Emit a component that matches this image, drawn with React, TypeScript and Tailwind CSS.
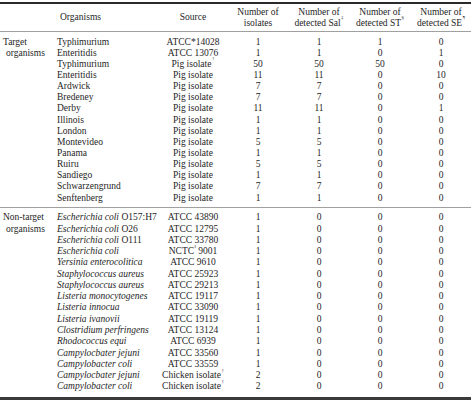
import React from "react";

type Row = {
  name: React.ReactNode;
  label?: string;
  source: React.ReactNode;
  vals: string[];
};

const Sup = ({ c }: { c: string }) => (
  <sup className="text-[5px] leading-none align-top ml-[0.5px]">{c}</sup>
);

const pig = "Pig isolate";

const targetRows: Row[] = [
  { name: "Typhimurium", label: "Target", source: "ATCC*14028", vals: ["1", "1", "1", "0"] },
  { name: "Enteritidis", label: "organisms", source: "ATCC 13076", vals: ["1", "1", "0", "1"] },
  { name: "Typhimurium", source: <>Pig isolate<Sup c="†" /></>, vals: ["50", "50", "50", "0"] },
  { name: "Enteritidis", source: pig, vals: ["11", "11", "0", "10"] },
  { name: "Ardwick", source: pig, vals: ["7", "7", "0", "0"] },
  { name: "Bredeney", source: pig, vals: ["7", "7", "0", "0"] },
  { name: "Derby", source: pig, vals: ["11", "11", "0", "1"] },
  { name: "Illinois", source: pig, vals: ["1", "1", "0", "0"] },
  { name: "London", source: pig, vals: ["1", "1", "0", "0"] },
  { name: "Montevideo", source: pig, vals: ["5", "5", "0", "0"] },
  { name: "Panama", source: pig, vals: ["1", "1", "0", "0"] },
  { name: "Ruiru", source: pig, vals: ["5", "5", "0", "0"] },
  { name: "Sandiego", source: pig, vals: ["1", "1", "0", "0"] },
  { name: "Schwarzengrund", source: pig, vals: ["7", "7", "0", "0"] },
  { name: "Senftenberg", source: pig, vals: ["1", "1", "0", "0"] },
];

const it = (s: string, rest?: string) => (
  <>
    <i>{s}</i>
    {rest ? " " + rest : ""}
  </>
);

const zeros = ["1", "0", "0", "0"];
const chick = <>Chicken isolate<Sup c="†" /></>;

const nonTargetRows: Row[] = [
  { name: it("Escherichia coli", "O157:H7"), label: "Non-target", source: "ATCC 43890", vals: zeros },
  { name: it("Escherichia coli", "O26"), label: "organisms", source: "ATCC 12795", vals: zeros },
  { name: it("Escherichia coli", "O111"), source: "ATCC 33780", vals: zeros },
  { name: it("Escherichia coli"), source: <>NCTC<Sup c="‖" /> 9001</>, vals: zeros },
  { name: it("Yersinia enterocolitica"), source: "ATCC 9610", vals: zeros },
  { name: it("Staphylococcus aureus"), source: "ATCC 25923", vals: zeros },
  { name: it("Staphylococcus aureus"), source: "ATCC 29213", vals: zeros },
  { name: it("Listeria monocytogenes"), source: "ATCC 19117", vals: zeros },
  { name: it("Listeria innocua"), source: "ATCC 33090", vals: zeros },
  { name: it("Listeria ivanovii"), source: "ATCC 19119", vals: zeros },
  { name: it("Clostridium perfringens"), source: "ATCC 13124", vals: zeros },
  { name: it("Rhodococcus equi"), source: "ATCC 6939", vals: zeros },
  { name: it("Campylocbater jejuni"), source: "ATCC 33560", vals: zeros },
  { name: it("Campylobacter coli"), source: "ATCC 33559", vals: zeros },
  { name: it("Campylocbater jejuni"), source: chick, vals: ["2", "0", "0", "0"] },
  { name: it("Campylobacter coli"), source: chick, vals: ["2", "0", "0", "0"] },
];

const cols = "grid grid-cols-[55px_95px_86px_44px_78px_44px_69px]";

function BodyRow({ row, idx, h }: { row: Row; idx: number; h: string }) {
  return (
    <div className={`${cols} ${h} items-center whitespace-nowrap`}>
      <div className={idx === 1 ? "pl-[6px]" : "pl-[3px]"}>{row.label}</div>
      <div className="pl-[2px]">{row.name}</div>
      <div className="text-center">{row.source}</div>
      <div className="text-center">{row.vals[0]}</div>
      <div className="text-center">{row.vals[1]}</div>
      <div className="text-center">{row.vals[2]}</div>
      <div className="text-center pl-[9px]">{row.vals[3]}</div>
    </div>
  );
}

function HeadCell({ a, b, pad }: { a: string; b: React.ReactNode; pad?: boolean }) {
  return (
    <div className={`flex flex-col items-center leading-[10.5px] ${pad ? "pl-[9px]" : ""}`}>
      <span>{a}</span>
      <span>{b}</span>
    </div>
  );
}

export default function App() {
  return (
    <div
      className="w-[474px] h-[400px] bg-white text-[#1e1e1e] text-[9.5px] leading-[11px] overflow-hidden"
      style={{ fontFamily: '"Liberation Serif", "Times New Roman", serif' }}
    >
      <div className="w-[471px]">
        <div className="mt-[2px] h-[2px] bg-[#2a2a2a]" />
        {/* header */}
        <div className={`${cols} h-[27px] items-center whitespace-nowrap`}>
          <div />
          <div className="text-center">
            <span className="relative left-[-22px]">Organisms</span>
          </div>
          <div className="text-center">Source</div>
          <HeadCell a="Number of" b="isolates" />
          <HeadCell a="Number of" b={<>detected Sal<Sup c="‡" /></>} />
          <HeadCell a="Number of" b={<>detected ST<Sup c="§" /></>} />
          <HeadCell a="Number of" b={<>detected SE<Sup c="¶" /></>} pad />
        </div>
        <div className="h-px bg-[#a0a0a0]" />
        <div className="pt-[4.5px] pb-[3px]">
          {targetRows.map((r, i) => (
            <BodyRow key={i} row={r} idx={i} h="h-[11.15px]" />
          ))}
        </div>
        <div className="h-px bg-[#a0a0a0]" />
        <div className="pt-[4.6px] pb-[5px]">
          {nonTargetRows.map((r, i) => (
            <BodyRow key={i} row={r} idx={i} h="h-[11.27px]" />
          ))}
        </div>
        <div className="h-[3px] bg-[#3a3a3a]" />
      </div>
    </div>
  );
}
